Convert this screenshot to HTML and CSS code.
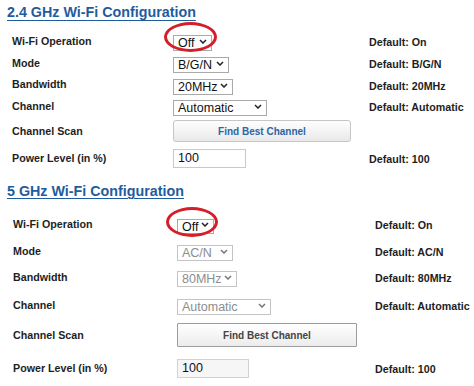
FILE: index.html
```html
<!DOCTYPE html>
<html lang="en">
<head>
  <meta charset="UTF-8">
  <title>Wi-Fi Configuration</title>
  <link rel="stylesheet" href="styles.css">
</head>
<body>
  <!-- 2.4 GHz radio -->
  <section class="wifi-config wifi-config--24">
    <h2 class="config-title"><a href="#">2.4 GHz Wi-Fi Configuration</a></h2>
    <div class="config-grid">
      <label class="field-label">Wi-Fi Operation</label>
      <div class="field-control">
        <span class="select select--op">
          <select><option>On</option><option selected>Off</option></select>
          <svg class="chevron" width="8" height="5" viewBox="0 0 8 5"><path d="M1 1l3 3 3-3"/></svg>
          <span class="highlight"></span>
        </span>
      </div>
      <div class="field-default">Default: On</div>

      <label class="field-label">Mode</label>
      <div class="field-control">
        <span class="select select--mode">
          <select><option selected>B/G/N</option><option>G/N</option><option>N</option></select>
          <svg class="chevron" width="8" height="5" viewBox="0 0 8 5"><path d="M1 1l3 3 3-3"/></svg>
        </span>
      </div>
      <div class="field-default">Default: B/G/N</div>

      <label class="field-label">Bandwidth</label>
      <div class="field-control">
        <span class="select select--bw">
          <select><option selected>20MHz</option><option>40MHz</option></select>
          <svg class="chevron" width="8" height="5" viewBox="0 0 8 5"><path d="M1 1l3 3 3-3"/></svg>
        </span>
      </div>
      <div class="field-default">Default: 20MHz</div>

      <label class="field-label">Channel</label>
      <div class="field-control">
        <span class="select select--ch">
          <select><option selected>Automatic</option><option>1</option><option>6</option><option>11</option></select>
          <svg class="chevron" width="8" height="5" viewBox="0 0 8 5"><path d="M1 1l3 3 3-3"/></svg>
        </span>
      </div>
      <div class="field-default">Default: Automatic</div>

      <label class="field-label">Channel Scan</label>
      <div class="field-control">
        <button class="scan-button" type="button">Find Best Channel</button>
      </div>
      <div class="field-default"></div>

      <label class="field-label">Power Level (in %)</label>
      <div class="field-control">
        <input class="text-input" type="text" value="100">
      </div>
      <div class="field-default">Default: 100</div>
    </div>
  </section>

  <!-- 5 GHz radio -->
  <section class="wifi-config wifi-config--5">
    <h2 class="config-title"><a href="#">5 GHz Wi-Fi Configuration</a></h2>
    <div class="config-grid">
      <label class="field-label">Wi-Fi Operation</label>
      <div class="field-control">
        <span class="select select--op">
          <select><option>On</option><option selected>Off</option></select>
          <svg class="chevron" width="8" height="5" viewBox="0 0 8 5"><path d="M1 1l3 3 3-3"/></svg>
          <span class="highlight"></span>
        </span>
      </div>
      <div class="field-default">Default: On</div>

      <label class="field-label">Mode</label>
      <div class="field-control">
        <span class="select select--mode is-disabled">
          <select disabled><option selected>AC/N</option><option>N</option></select>
          <svg class="chevron" width="8" height="5" viewBox="0 0 8 5"><path d="M1 1l3 3 3-3"/></svg>
        </span>
      </div>
      <div class="field-default">Default: AC/N</div>

      <label class="field-label">Bandwidth</label>
      <div class="field-control">
        <span class="select select--bw is-disabled">
          <select disabled><option selected>80MHz</option><option>40MHz</option><option>20MHz</option></select>
          <svg class="chevron" width="8" height="5" viewBox="0 0 8 5"><path d="M1 1l3 3 3-3"/></svg>
        </span>
      </div>
      <div class="field-default">Default: 80MHz</div>

      <label class="field-label">Channel</label>
      <div class="field-control">
        <span class="select select--ch is-disabled">
          <select disabled><option selected>Automatic</option><option>36</option><option>149</option></select>
          <svg class="chevron" width="8" height="5" viewBox="0 0 8 5"><path d="M1 1l3 3 3-3"/></svg>
        </span>
      </div>
      <div class="field-default">Default: Automatic</div>

      <label class="field-label">Channel Scan</label>
      <div class="field-control">
        <button class="scan-button scan-button--muted" type="button">Find Best Channel</button>
      </div>
      <div class="field-default"></div>

      <label class="field-label">Power Level (in %)</label>
      <div class="field-control">
        <input class="text-input text-input--muted" type="text" value="100">
      </div>
      <div class="field-default">Default: 100</div>
    </div>
  </section>
</body>
</html>
```

FILE: styles.css
```css
:root {
  --text-main: #1e1e1e;
  --title-blue: #1f5c9d;
  --link-blue: #2c66a6;
  --border-field: #a9a9a9;
  --border-soft: #c9c9c9;
  --ring-red: #d41f2b;
}

body {
  margin: 0;
  background: #fff;
  color: var(--text-main);
  font-family: "Liberation Sans", Arial, Helvetica, sans-serif;
  overflow: hidden;
}

.wifi-config--24 {
  padding-top: 4px;
}
.wifi-config--5 {
  margin-top: 12px;
}

.config-title {
  margin: 0 0 0 7px;
  font-size: 14.3px;
  line-height: 16px;
  font-weight: 700;
}
.config-title a {
  color: var(--title-blue);
  text-decoration: underline;
  text-decoration-thickness: 1px;
  text-underline-offset: 3px;
}
.wifi-config--5 .config-title a {
  text-underline-offset: 2px;
}

.config-grid {
  display: grid;
  align-items: center;
}
.wifi-config--24 .config-grid {
  margin-top: 10px;
  padding-left: 12px;
  grid-template-columns: 161px 196px auto;
  grid-template-rows: 22px 22px 21px 22px 28px 26px;
}
.wifi-config--5 .config-grid {
  margin-top: 11px;
  padding-left: 13px;
  grid-template-columns: 164px 198px auto;
  grid-template-rows: 28px 26px 26px 30px 30px 36px;
}

.field-label,
.field-default {
  font-size: 10.7px;
  font-weight: 700;
  line-height: 13px;
  white-space: nowrap;
}
.field-default {
  padding-top: 3px;
}

.field-control {
  display: flex;
  align-items: center;
}

/* select boxes */
.select {
  position: relative;
  display: inline-block;
  height: 16px;
}
.select select {
  appearance: none;
  -webkit-appearance: none;
  box-sizing: border-box;
  width: 100%;
  height: 100%;
  margin: 0;
  padding: 0 14px 0 4px;
  border: 1px solid var(--border-field);
  border-radius: 0;
  background: #fff;
  color: #111;
  font-family: inherit;
  font-size: 12.5px;
  line-height: 14px;
}
.select .chevron {
  position: absolute;
  right: 5px;
  top: 6px;
  fill: none;
  stroke: #222;
  stroke-width: 1.5;
}
.select--op { width: 39px; }
.select--mode { width: 56px; }
.select--bw { width: 60px; }
.select--ch { width: 94px; }

.select.is-disabled select {
  color: #8c8c8c;
  border-color: #c4c4c4;
  opacity: 1;
}
.select.is-disabled .chevron {
  stroke: #777;
}
.wifi-config--5 .select--op { width: 37px; height: 15px; }
.wifi-config--5 .select--op .chevron { top: 5px; }

/* red annotation ring around the radio switch */
.highlight {
  position: absolute;
  left: -9px;
  right: -5px;
  top: -11px;
  bottom: -3px;
  border: 3px solid var(--ring-red);
  border-radius: 50%;
  pointer-events: none;
}
.wifi-config--5 .highlight {
  left: -11px;
  right: -4px;
  top: -10px;
  bottom: -5px;
}

/* scan button */
.scan-button {
  box-sizing: border-box;
  width: 178px;
  height: 22px;
  margin: 0;
  padding: 0;
  border: 1px solid #c6c6c6;
  border-radius: 3px;
  background: linear-gradient(#fefefe, #e9e9e9);
  color: var(--link-blue);
  font-family: inherit;
  font-size: 10px;
  font-weight: 700;
}
.scan-button--muted {
  width: 180px;
  height: 24px;
  border-color: #9d9d9d;
  border-radius: 1px;
  background: linear-gradient(#ffffff, #ececec);
  color: #444;
}

/* power level */
.text-input {
  box-sizing: border-box;
  width: 73px;
  height: 19px;
  margin: 0;
  padding: 0 4px;
  border: 1px solid var(--border-soft);
  background: #fff;
  color: #111;
  font-family: inherit;
  font-size: 12.5px;
}
.text-input--muted {
  width: 72px;
  background: #f6f6f7;
  border-color: #cfd3d8;
}
```
